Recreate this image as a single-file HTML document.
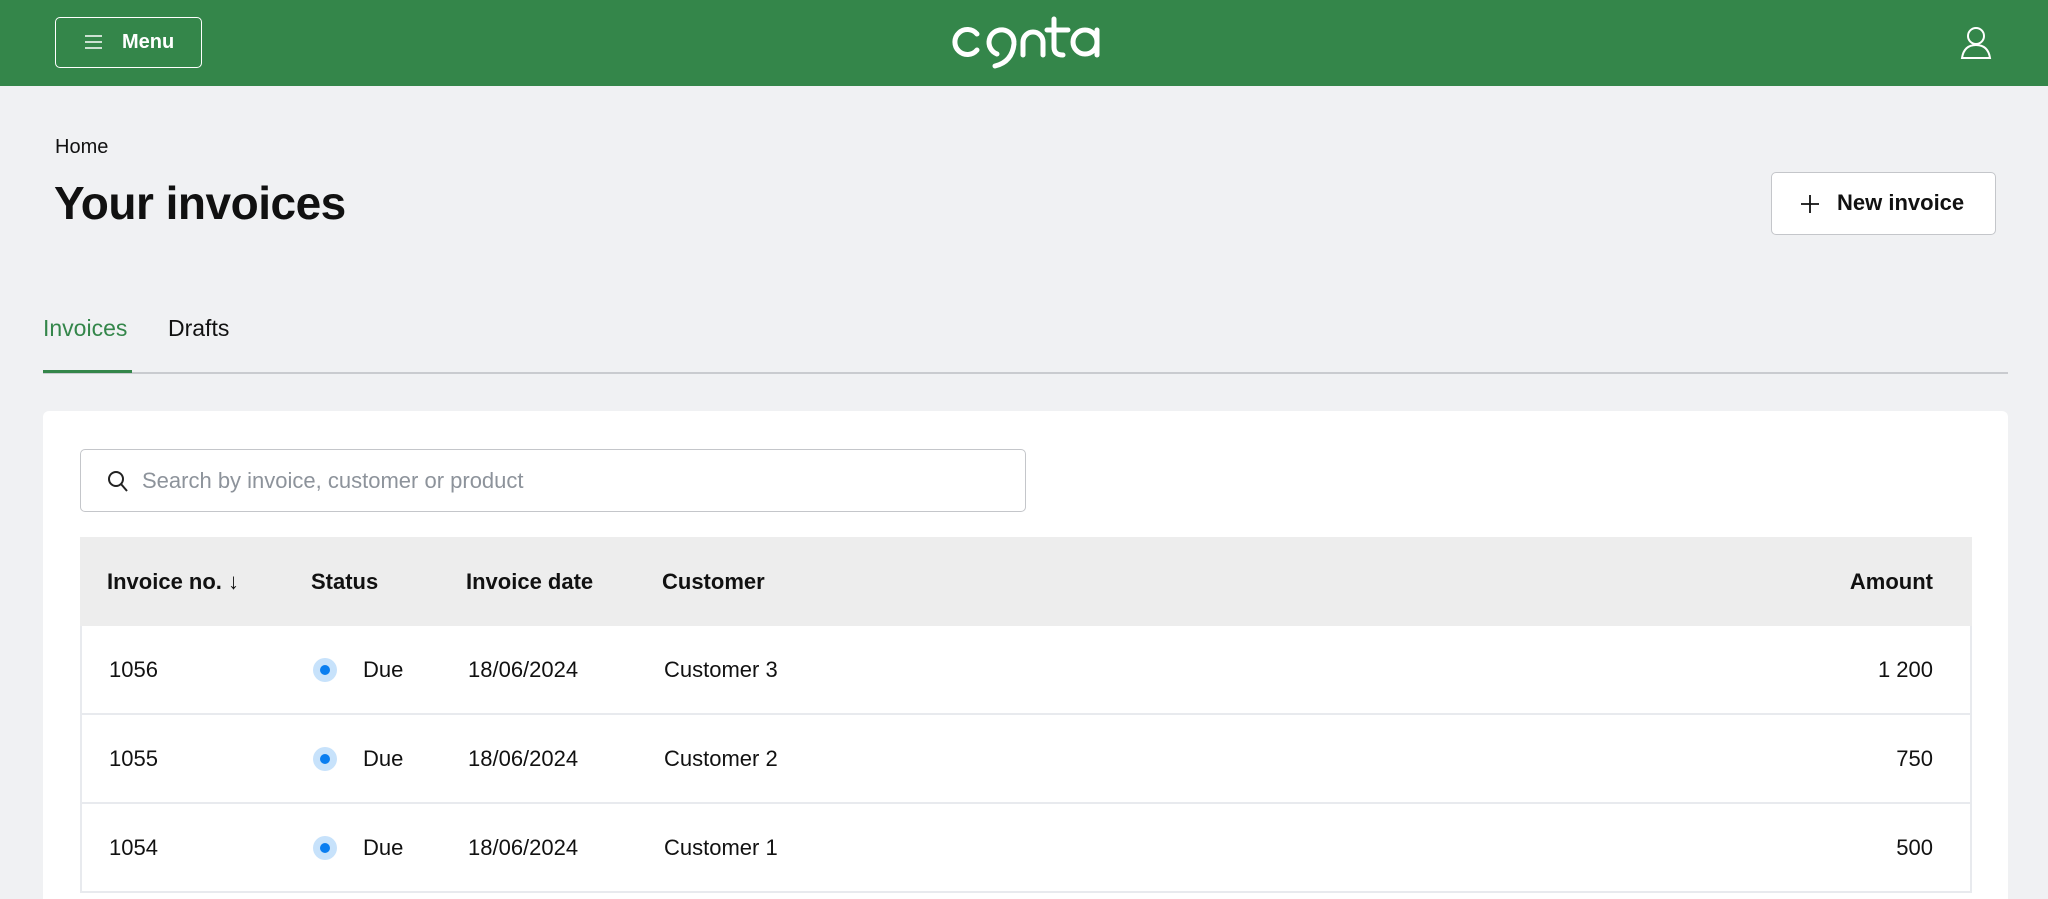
<!DOCTYPE html>
<html style="width:2048px;height:899px;overflow:hidden"><head><style>
*{margin:0;padding:0;box-sizing:border-box}
body{width:2048px;height:899px;overflow:hidden;background:#f0f1f3;font-family:"Liberation Sans",sans-serif;color:#111;position:relative}
.hdr{position:absolute;left:0;top:0;width:2048px;height:86px;background:#34864a}
.menu{position:absolute;left:55px;top:17px;width:147px;height:51px;border:1.5px solid #fff;border-radius:5px;color:#fff;font-weight:bold;font-size:20px;line-height:48px;padding-left:66px}
.abs{position:absolute}
.card{position:absolute;left:43px;top:411px;width:1965px;height:488px;background:#fff;border-radius:6px 6px 0 0}
.search{position:absolute;left:80px;top:449px;width:946px;height:63px;border:1.5px solid #c4c6ca;border-radius:5px;background:#fff}
.tbl{position:absolute;left:80px;top:537px;width:1892px;height:360px;overflow:hidden}
.row{position:relative;height:89px;border:2px solid #e8eaee;border-top:none;font-size:22px;background:#fff}
.row.h{background:#ededed;border:none;height:89px;font-weight:bold}
.row span{position:absolute;top:50%;transform:translateY(-50%);white-space:nowrap}
.dot{width:24px;height:24px;border-radius:50%;background:#c7e2fb}
.dot::after{content:"";position:absolute;left:7px;top:7px;width:10px;height:10px;border-radius:50%;background:#0a7ef0}
</style></head><body>
<div class="hdr">
 <div class="menu">Menu</div>
 <svg class="abs" style="left:84px;top:34px" width="20" height="16"><path d="M1 2H18M1 8H18M1 14H18" stroke="#fff" stroke-width="1.6"/></svg>
 <svg class="abs" style="left:900px;top:0" width="300" height="86" viewBox="900 0 300 86" fill="none" stroke="#fff" stroke-width="5" stroke-linecap="round">
  <path d="M977,34 A12.5,12.5 0 1 0 977,50"/>
  <path d="M997,54 A12.5,12.5 0 1 1 1014,42"/>
  <path d="M1014,44 Q1012,62 995,66"/>
  <path d="M1023,55 V42 A10,10 0 0 1 1043,42 V55"/>
  <path d="M1054,19 V47 Q1054,55 1063,55 M1047,30 H1068"/>
  <circle cx="1085" cy="42" r="12"/>
  <path d="M1097,30 V55"/>
 </svg>
 <svg class="abs" style="left:1960px;top:26px" width="32" height="34" fill="none" stroke="#fff" stroke-width="2"><circle cx="16" cy="10" r="8"/><path d="M2 32 Q4 19 16 19 Q28 19 30 32 Z"/></svg>
</div>
<div class="abs" style="left:55px;top:136px;font-size:20px">Home</div>
<div class="abs" style="left:54px;top:176px;font-size:46px;font-weight:bold;letter-spacing:-0.5px">Your invoices</div>
<div class="abs" style="left:1771px;top:172px;width:225px;height:63px;background:#fff;border:1.5px solid #c4c6ca;border-radius:5px;font-size:22px;font-weight:bold;line-height:60px;padding-left:65px">New invoice</div>
<svg class="abs" style="left:1800px;top:194px" width="20" height="20"><path d="M10 1V19M1 10H19" stroke="#111" stroke-width="1.8"/></svg>
<div class="abs" style="left:43px;top:315px;font-size:23px;color:#34864a">Invoices</div>
<div class="abs" style="left:168px;top:315px;font-size:23px">Drafts</div>
<div class="abs" style="left:43px;top:372px;width:1965px;height:2px;background:#c9cbcf"></div>
<div class="abs" style="left:43px;top:370px;width:89px;height:3px;background:#34864a"></div>
<div class="card"></div>
<div class="search"><svg class="abs" style="left:26px;top:20px" width="22" height="24" fill="none" stroke="#222" stroke-width="2"><circle cx="9" cy="9" r="7"/><path d="M14 14L20 21"/></svg><span class="abs" style="left:61px;top:18px;font-size:22px;color:#8d939b">Search by invoice, customer or product</span></div>
<div class="tbl">
 <div class="row h"><span style="left:27px">Invoice no. ↓</span><span style="left:231px">Status</span><span style="left:386px">Invoice date</span><span style="left:582px">Customer</span><span style="right:39px">Amount</span></div>
 <div class="row"><span style="left:27px">1056</span><span class="dot" style="left:231px"></span><span style="left:281px">Due</span><span style="left:386px">18/06/2024</span><span style="left:582px">Customer 3</span><span style="right:37px">1 200</span></div>
 <div class="row"><span style="left:27px">1055</span><span class="dot" style="left:231px"></span><span style="left:281px">Due</span><span style="left:386px">18/06/2024</span><span style="left:582px">Customer 2</span><span style="right:37px">750</span></div>
 <div class="row"><span style="left:27px">1054</span><span class="dot" style="left:231px"></span><span style="left:281px">Due</span><span style="left:386px">18/06/2024</span><span style="left:582px">Customer 1</span><span style="right:37px">500</span></div>
</div>
</body></html>
